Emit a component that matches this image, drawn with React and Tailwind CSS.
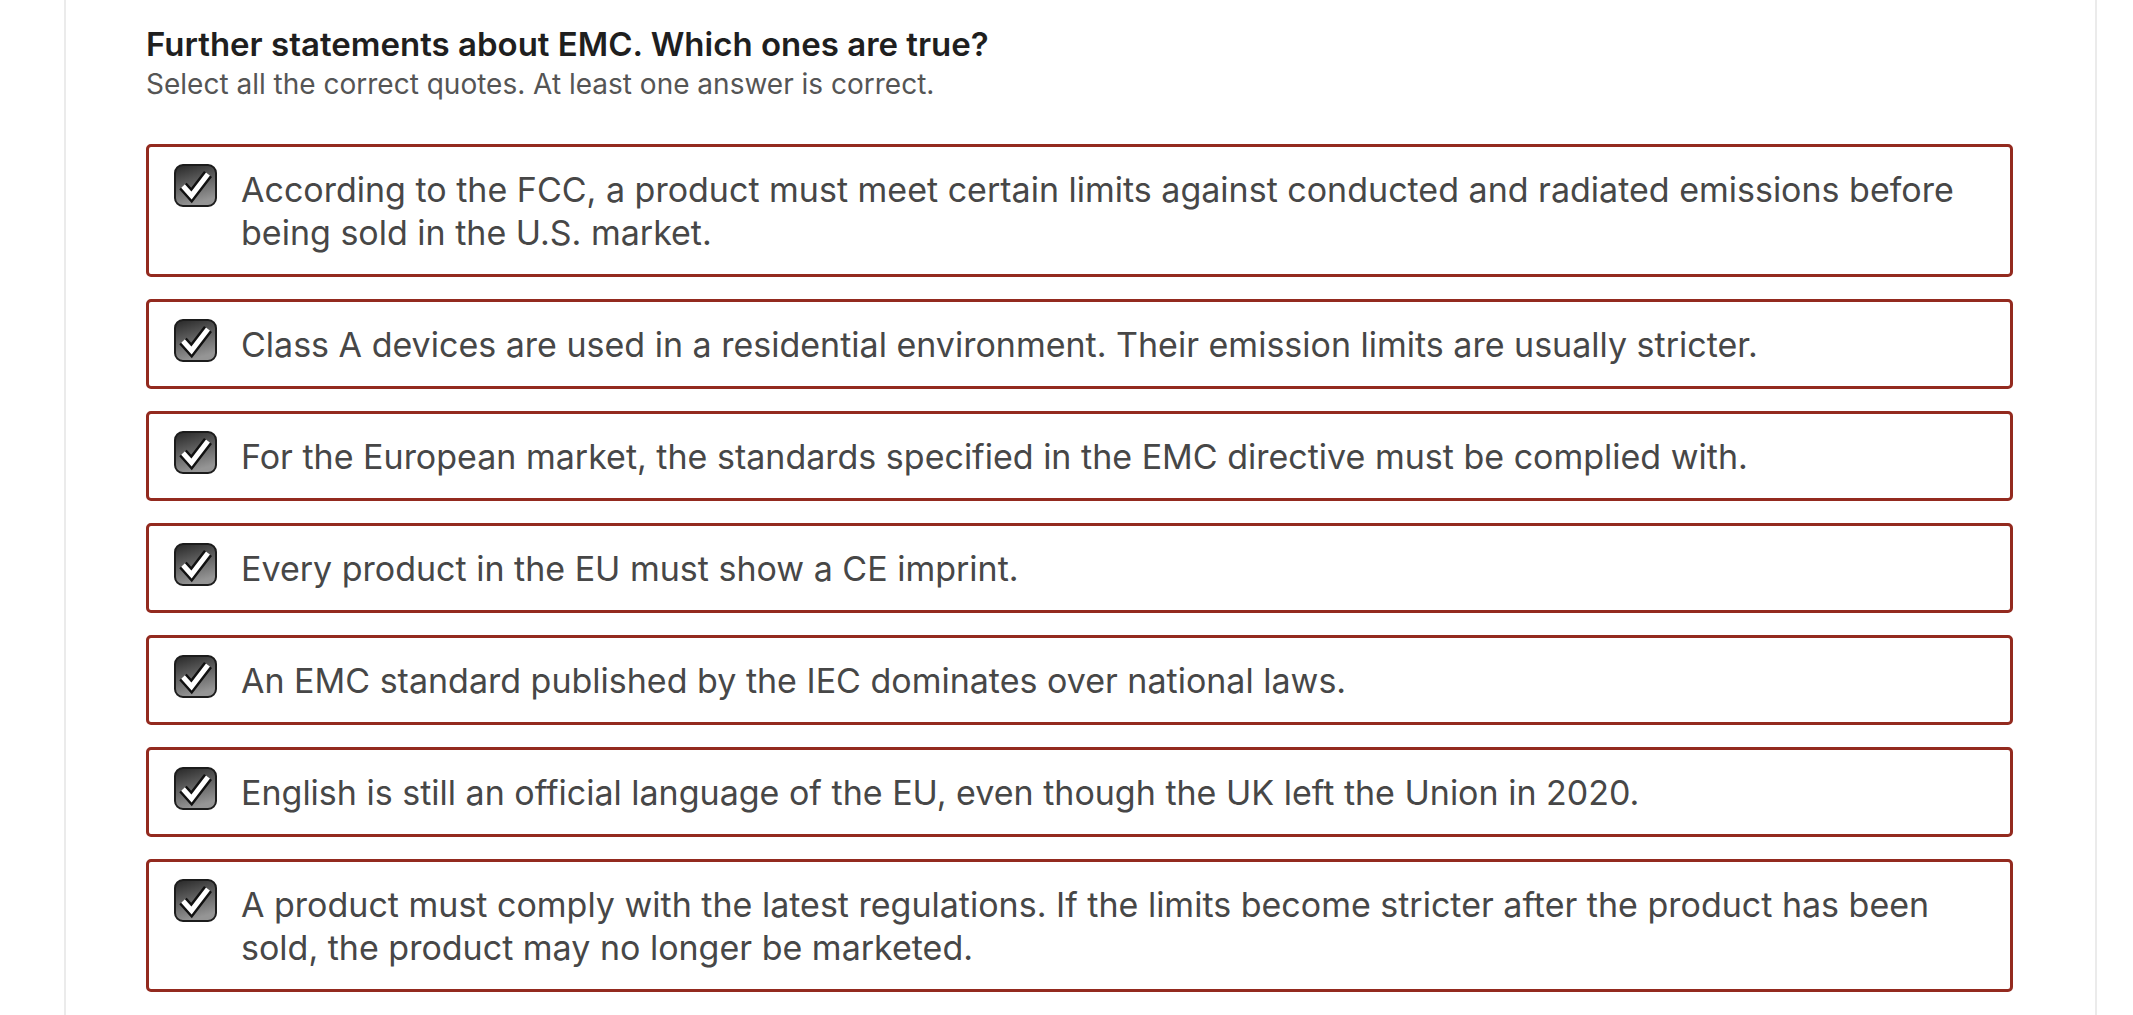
import React from "react";

const items = [
  "According to the FCC, a product must meet certain limits against conducted and radiated emissions before being sold in the U.S. market.",
  "Class A devices are used in a residential environment. Their emission limits are usually stricter.",
  "For the European market, the standards specified in the EMC directive must be complied with.",
  "Every product in the EU must show a CE imprint.",
  "An EMC standard published by the IEC dominates over national laws.",
  "English is still an official language of the EU, even though the UK left the Union in 2020.",
  "A product must comply with the latest regulations. If the limits become stricter after the product has been sold, the product may no longer be marketed.",
];

function CheckIcon({ id }) {
  return (
    <svg width="43" height="43" viewBox="0 0 43 43" className="shrink-0 mt-[-4px]">
      <defs>
        <linearGradient id={id} x1="0" y1="0" x2="0.3" y2="1">
          <stop offset="0" stopColor="#262626" />
          <stop offset="1" stopColor="#959595" />
        </linearGradient>
      </defs>
      <rect x="1" y="1" width="41" height="41" rx="8" fill={`url(#${id})`} stroke="#1c1c1c" strokeWidth="2" />
      <path d="M9 22 L17.5 31.5 L34 10" fill="none" stroke="#111" strokeWidth="10" strokeLinejoin="miter" strokeLinecap="butt" />
      <path d="M9 22 L17.5 31.5 L34 10" fill="none" stroke="#ffffff" strokeWidth="5" strokeLinejoin="miter" strokeLinecap="butt" />
    </svg>
  );
}

export default function App() {
  return (
    <div className="bg-white min-h-screen" style={{ fontFamily: "Inter, 'Noto Sans', sans-serif" }}>
      <div className="ml-[64px] w-[2033px] min-h-screen border-x-2 border-[#ebebeb] pl-[80px] pr-[82px] pt-[24px]">
        <h2 className="text-[33px] leading-[40px] font-semibold text-[#1f1f1f]">
          Further statements about EMC. Which ones are true?
        </h2>
        <p className="mt-[2px] text-[28px] leading-[36px] text-[#555555]">
          Select all the correct quotes. At least one answer is correct.
        </p>
        <div className="mt-[42px] flex flex-col gap-[22px]">
          {items.map((t, i) => (
            <div
              key={i}
              className="flex items-start gap-6 border-[3px] border-[#932a1f] rounded-[5px] pl-[25px] pr-[25px] pt-[21px] pb-[20px]"
            >
              <CheckIcon id={`g${i}`} />
              <span className="text-[34px] leading-[43px] text-[#474747]">{t}</span>
            </div>
          ))}
        </div>
      </div>
    </div>
  );
}
